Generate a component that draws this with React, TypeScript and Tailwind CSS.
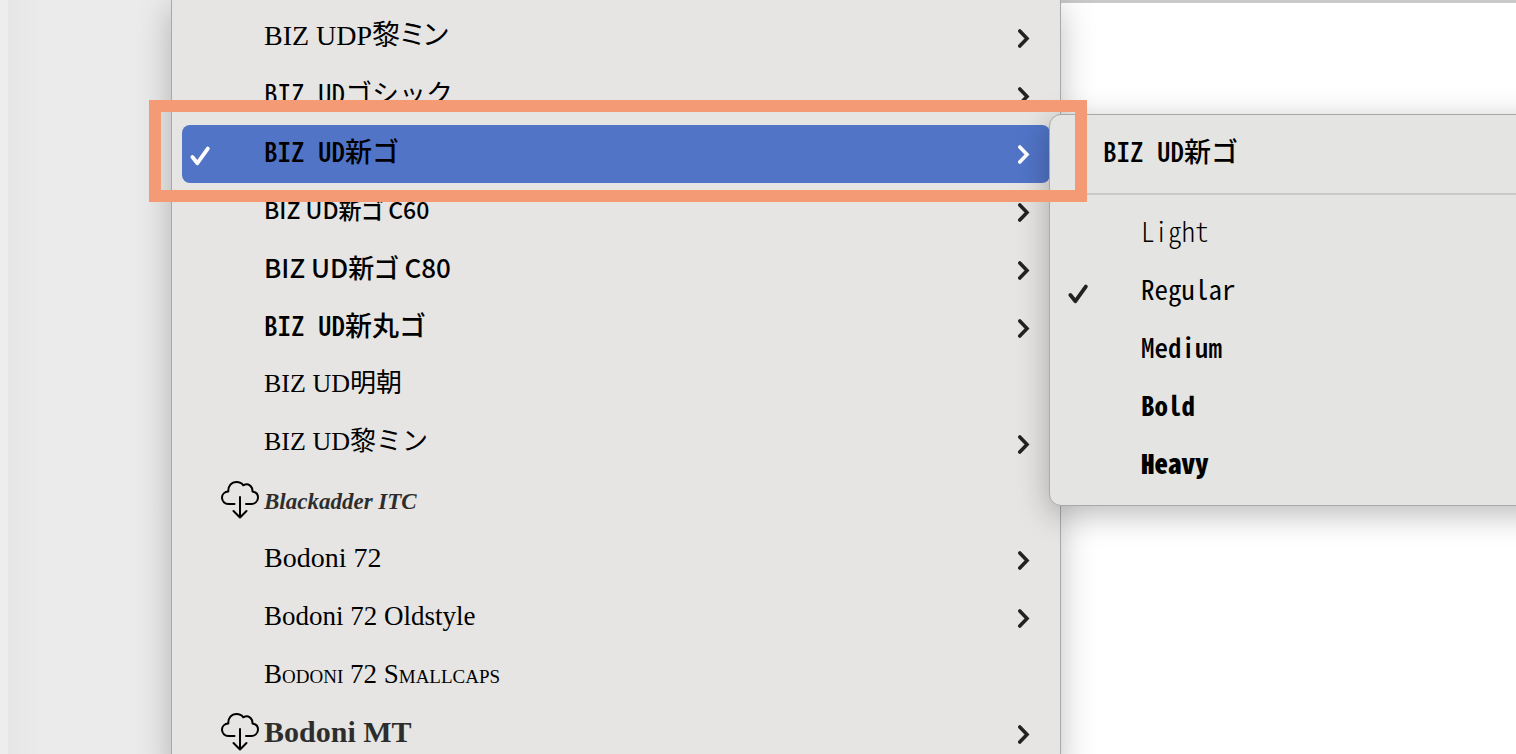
import { useState } from 'react';
import clsx from 'clsx';

interface FontFamily {
  id: string;
  name: string;
  face: string;
  hasStyles?: boolean;
  cloud?: boolean;
}

// Half-width Latin for the fixed-pitch families, proportional for the others
const GOTHIC = "font-['Noto_Sans_CJK_JP',sans-serif] text-[27px] pb-1.5 [font-feature-settings:'hwid']";
const GOTHIC_P = "font-['Noto_Sans_CJK_JP',sans-serif] pb-1.5 [font-feature-settings:'palt']";
const MINCHO = "font-['Liberation_Serif','Noto_Sans_CJK_JP',serif] text-[26px] pb-1";
const BODONI = "font-['Liberation_Serif',serif] pb-1";

const FAMILIES: FontFamily[] = [
  { id: 'udp-reimin', name: 'BIZ UDP黎ミン', face: "font-['Liberation_Serif','Noto_Sans_CJK_JP',serif] text-[28px] pb-1 [font-feature-settings:'palt']", hasStyles: true },
  { id: 'ud-gothic', name: 'BIZ UDゴシック', face: GOTHIC, hasStyles: true },
  { id: 'ud-shingo', name: 'BIZ UD新ゴ', face: `${GOTHIC} font-medium`, hasStyles: true },
  { id: 'ud-shingo-c60', name: 'BIZ UD新ゴ C60', face: `${GOTHIC_P} text-[23px] font-medium`, hasStyles: true },
  { id: 'ud-shingo-c80', name: 'BIZ UD新ゴ C80', face: `${GOTHIC_P} text-[26px] font-medium`, hasStyles: true },
  { id: 'ud-shinmaru', name: 'BIZ UD新丸ゴ', face: `${GOTHIC} font-medium`, hasStyles: true },
  { id: 'ud-mincho', name: 'BIZ UD明朝', face: MINCHO },
  { id: 'ud-reimin', name: 'BIZ UD黎ミン', face: MINCHO, hasStyles: true },
  { id: 'blackadder', name: 'Blackadder ITC', face: "font-['Liberation_Serif',serif] text-[23px] font-bold italic opacity-80", cloud: true },
  { id: 'bodoni', name: 'Bodoni 72', face: `${BODONI} text-[28px]`, hasStyles: true },
  { id: 'bodoni-os', name: 'Bodoni 72 Oldstyle', face: `${BODONI} text-[27px]`, hasStyles: true },
  { id: 'bodoni-sc', name: 'Bodoni 72 Smallcaps', face: `${BODONI} text-[27px] [font-variant-caps:small-caps]` },
  { id: 'bodoni-mt', name: 'Bodoni MT', face: `${BODONI} text-[30px] font-bold opacity-80`, hasStyles: true, cloud: true },
];

const STYLES = [
  { name: 'Light', weight: 'font-light' },
  { name: 'Regular', weight: 'font-normal' },
  { name: 'Medium', weight: 'font-medium' },
  { name: 'Bold', weight: 'font-bold' },
  { name: 'Heavy', weight: 'font-black' },
];

function CheckIcon() {
  return (
    <svg width="20" height="20" viewBox="0 0 20 20" fill="none" stroke="currentColor" strokeWidth="3.8" strokeLinecap="round" strokeLinejoin="round" aria-hidden="true">
      <path d="M2.4 11 7.400 17.200 17.800 2.600" />
    </svg>
  );
}

function ChevronIcon() {
  return (
    <svg width="12" height="20" viewBox="0 0 12 20" fill="none" stroke="currentColor" strokeWidth="3.6" strokeLinecap="round" strokeLinejoin="miter" aria-hidden="true">
      <path d="M1.800 3 9 10.500 1.800 18" />
    </svg>
  );
}

function CloudIcon() {
  return (
    <svg width="38" height="40" viewBox="0 0 38 40" fill="none" stroke="currentColor" strokeWidth="2" strokeLinecap="round" strokeLinejoin="round" aria-hidden="true">
      <path d="M13.500 24H7.500A6.300 6.300 0 0 1 1 17.600C1 14.200 3.700 11.700 7.300 11.500 7 6 10.500 2 15.500 2 18.500 2 20.800 3.200 22.300 5.300 27 2.800 31.800 5.800 31.500 11.500 35 12 37 14.500 37 17.600A6.400 6.400 0 0 1 30.500 24H25" />
      <path d="M19 17V37M12.500 31 19 37.500 25.500 31" />
    </svg>
  );
}

function StyleMenu() {
  const [current, setCurrent] = useState('Regular');

  return (
    <div className="absolute -top-[11px] left-full z-10 -ml-px w-[520px] rounded-xl border border-[#a9a9a9] bg-[#e4e4e2] pb-2.5 text-black shadow-[0_8px_32px_rgba(0,0,0,0.28)]">
      <h2 className={`${GOTHIC} flex h-[78px] items-center pl-[53px] font-medium leading-8`}>BIZ UD新ゴ</h2>
      <hr className="mb-2.5 border-t-2 border-[#c9c9c8]" />
      <ul>
        {STYLES.map(style => (
          <li key={style.name}>
            <button onClick={() => setCurrent(style.name)} className="flex h-[58px] w-full items-center pl-[18px] text-left">
              <span className="w-[73px] pt-1 text-[#222]">{current === style.name && <CheckIcon />}</span>
              <span className={`${GOTHIC} ${style.weight} leading-8`}>{style.name}</span>
            </button>
          </li>
        ))}
      </ul>
    </div>
  );
}

export default function App() {
  const [selected, setSelected] = useState('ud-shingo');

  return (
    <div className="flex h-screen overflow-hidden bg-white">
      <aside className="w-[171px] shrink-0 border-l-8 border-[#ededed] bg-linear-to-r from-[#e6e6e6] to-[#ebebeb] to-20%" />

      <nav aria-label="Fonts" className="relative z-10 h-max min-w-0 flex-1 border-x border-[#a9a9a9] bg-[#e6e5e3] px-2.5 pt-[9px] pb-2.5 shadow-[0_8px_32px_rgba(0,0,0,0.25)]">
        <ul>
          {FAMILIES.map(font => {
            const active = font.id === selected;

            return (
              <li key={font.id} className={clsx('relative', active && 'z-10')}>
                <button
                  onClick={() => setSelected(font.id)}
                  className={clsx('flex h-[58px] w-full items-center rounded-lg pr-5 pl-2 text-left', active && 'bg-[#5174c7]')}
                >
                  <span className="w-[31px] shrink-0 pt-1 text-white">{active && <CheckIcon />}</span>
                  <span className="w-[43px] shrink-0 pb-1">{font.cloud && <CloudIcon />}</span>
                  <span className={clsx(font.face, 'flex-1 leading-8 whitespace-nowrap')}>{font.name}</span>
                  {font.hasStyles && (
                    <span className={active ? 'text-white' : 'text-[#222]'}>
                      <ChevronIcon />
                    </span>
                  )}
                </button>
                {active && (
                  <>
                    <StyleMenu />
                    {/* Callout frame around the open row */}
                    <div className="pointer-events-none absolute -top-[25px] -right-[37px] -bottom-[19px] -left-[33px] z-20 border-12 border-[#f49a74]" />
                  </>
                )}
              </li>
            );
          })}
        </ul>
      </nav>

      <main className="w-[455px] shrink-0 border-t-3 border-[#c9c9c9] bg-white" />
    </div>
  );
}
